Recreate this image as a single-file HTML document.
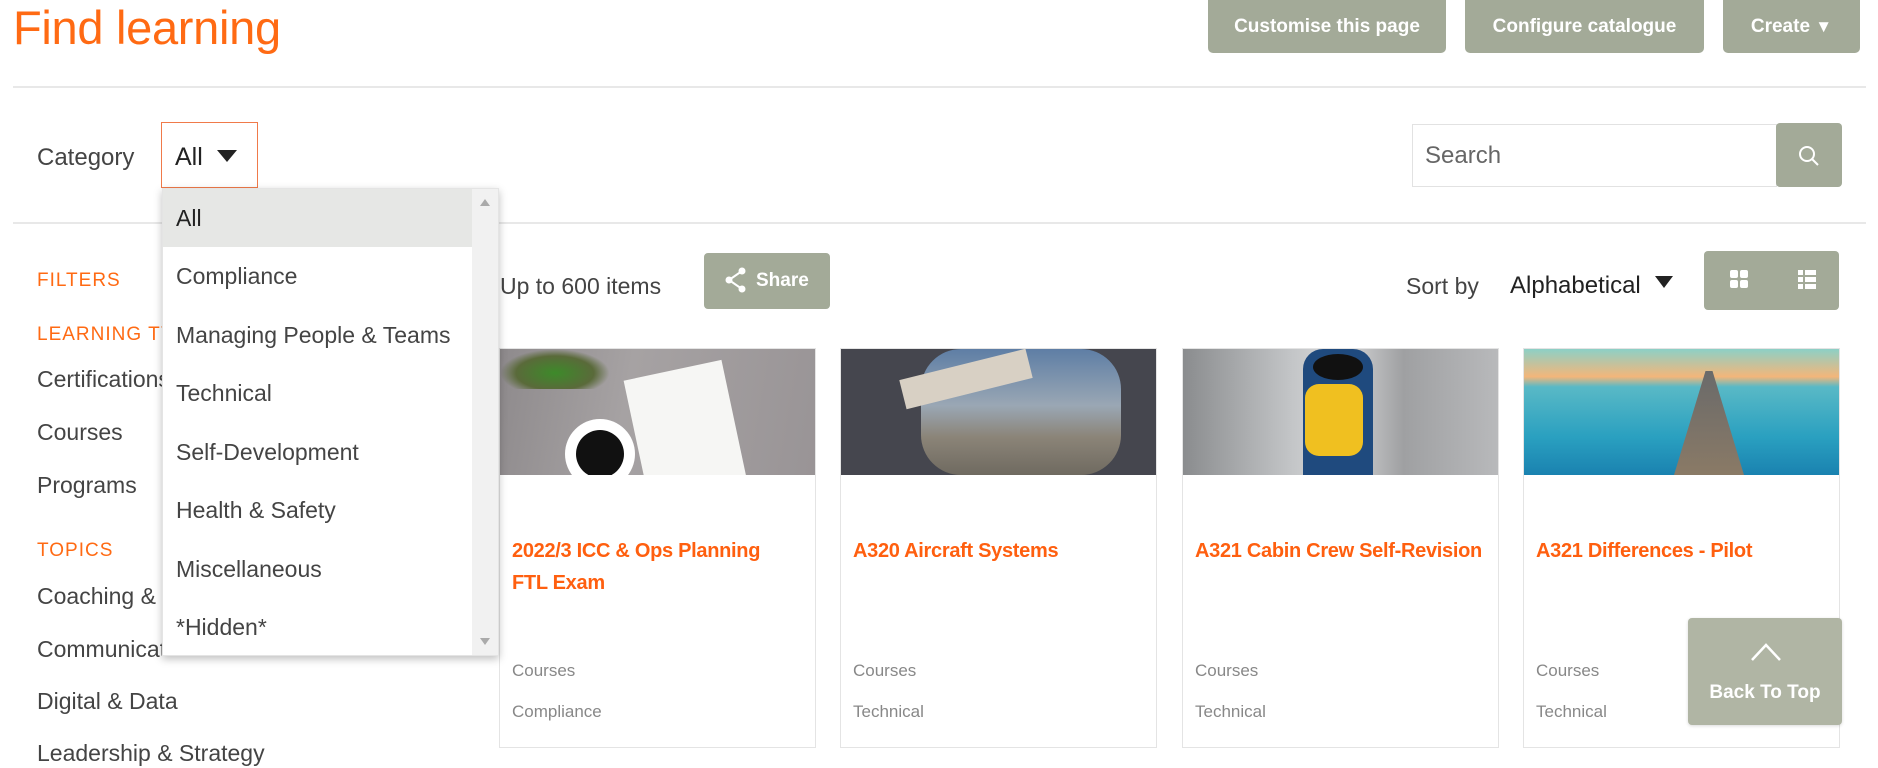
<!DOCTYPE html>
<html><head><meta charset="utf-8"><style>
*{box-sizing:border-box;margin:0;padding:0}
body{width:1878px;height:768px;overflow:hidden;background:#fff;font-family:"Liberation Sans",sans-serif;color:#333;position:relative}
.a{position:absolute}
h1{position:absolute;left:13px;top:0px;font-size:47px;font-weight:400;color:#ff6a13;letter-spacing:-0.3px}
.btn{position:absolute;top:0;height:53px;background:#a3aa98;color:#fff;font-weight:700;font-size:19px;border-radius:0 0 5px 5px;display:flex;align-items:center;justify-content:center}
.hr{position:absolute;left:13px;width:1853px;height:2px;background:#e8e8e8}
.lbl{font-size:24px;color:#444}
.dd{position:absolute;left:162px;top:188px;width:337px;height:468px;background:#fff;box-shadow:0 3px 8px rgba(0,0,0,.25);border:1px solid #e4e4e4}
.dd div.it{position:absolute;left:0;width:311px;height:58px;padding-left:13px;font-size:23px;color:#444;line-height:58px}
.sb{position:absolute;right:0;top:0;width:26px;height:100%;background:#f1f1f1}
.side{position:absolute;left:37px;font-size:23px;color:#444;white-space:nowrap}
.clip{width:125px;overflow:hidden}
.or{color:#ff6a13;font-size:19px;letter-spacing:1px}
.card{position:absolute;top:348px;width:317px;height:400px;border:1px solid #e4e4e4;background:#fff}
.img{position:absolute;left:0;top:0;width:315px;height:126px;overflow:hidden}
.ct{position:absolute;left:12px;top:186px;width:270px;color:#ff5f0f;font-size:20px;line-height:32px;font-weight:700;letter-spacing:-0.3px}
.m1,.m2{position:absolute;left:12px;color:#888;font-size:17px}
.m1{top:312px}.m2{top:353px}
</style></head><body>
<h1>Find learning</h1>
<div class="btn" style="left:1208px;width:238px">Customise this page</div>
<div class="btn" style="left:1465px;width:239px">Configure catalogue</div>
<div class="btn" style="left:1723px;width:137px">Create&nbsp;<span style="font-size:17px">▼</span></div>
<div class="hr" style="top:86px"></div>

<div class="a lbl" style="left:37px;top:144px">Category</div>
<div class="a" style="left:161px;top:122px;width:97px;height:66px;border:1px solid #f07a4a"></div>
<div class="a" style="left:175px;top:143px;font-size:25px;color:#222">All</div>
<div class="a" style="left:217px;top:150px;width:0;height:0;border-left:10px solid transparent;border-right:10px solid transparent;border-top:12px solid #222"></div>

<div class="a" style="left:1412px;top:124px;width:365px;height:63px;border:1px solid #e2e2e2"></div>
<div class="a" style="left:1425px;top:142px;font-size:24px;color:#666">Search</div>
<div class="a" style="left:1776px;top:123px;width:66px;height:64px;background:#a3aa98;border-radius:4px"></div>
<svg class="a" style="left:1796px;top:143px" width="26" height="26" viewBox="0 0 26 26"><circle cx="11" cy="11" r="7" fill="none" stroke="#fff" stroke-width="2"/><path d="M16 16 L22 22" stroke="#fff" stroke-width="2"/></svg>
<div class="hr" style="top:222px"></div>

<div class="side or" style="top:270px">FILTERS</div>
<div class="side or clip" style="top:324px">LEARNING TYPE</div>
<div class="side clip" style="top:366px">Certifications</div>
<div class="side" style="top:419px">Courses</div>
<div class="side" style="top:472px">Programs</div>
<div class="side or" style="top:540px">TOPICS</div>
<div class="side clip" style="top:583px">Coaching &amp; Mentoring</div>
<div class="side clip" style="top:636px">Communication</div>
<div class="side" style="top:688px">Digital &amp; Data</div>
<div class="side" style="top:740px">Leadership &amp; Strategy</div>

<div class="a lbl" style="left:500px;top:273px;font-size:23px">Up to 600 items</div>
<div class="a" style="left:704px;top:253px;width:126px;height:56px;background:#a3aa98;border-radius:4px;color:#fff;font-weight:700;font-size:19px;line-height:56px;padding-left:52px">Share</div>
<svg class="a" style="left:724px;top:267px" width="24" height="26" viewBox="0 0 24 26"><circle cx="18" cy="4" r="3.5" fill="#fff"/><circle cx="5" cy="13" r="3.5" fill="#fff"/><circle cx="18" cy="22" r="3.5" fill="#fff"/><path d="M18 4 L5 13 L18 22" stroke="#fff" stroke-width="2" fill="none"/></svg>

<div class="a lbl" style="left:1406px;top:273px;font-size:23px">Sort by</div>
<div class="a" style="left:1510px;top:272px;font-size:24px;color:#222">Alphabetical</div>
<div class="a" style="left:1655px;top:276px;width:0;height:0;border-left:9px solid transparent;border-right:9px solid transparent;border-top:12px solid #222"></div>
<div class="a" style="left:1704px;top:251px;width:135px;height:59px;background:#a3aa98;border-radius:4px"></div>
<svg class="a" style="left:1728px;top:268px" width="22" height="22" viewBox="0 0 22 22" fill="#fff"><rect x="2" y="2" width="8" height="8" rx="2"/><rect x="12" y="2" width="8" height="8" rx="2"/><rect x="2" y="12" width="8" height="8" rx="2"/><rect x="12" y="12" width="8" height="8" rx="2"/></svg>
<svg class="a" style="left:1796px;top:268px" width="22" height="22" viewBox="0 0 22 22" fill="#fff"><rect x="2" y="2" width="5" height="5"/><rect x="9" y="2" width="11" height="5"/><rect x="2" y="9" width="5" height="5"/><rect x="9" y="9" width="11" height="5"/><rect x="2" y="16" width="5" height="5"/><rect x="9" y="16" width="11" height="5"/></svg>

<div class="card" style="left:499px"><div class="img" style="background:linear-gradient(100deg,#8e8a8c,#a6a2a3 40%,#999496)">
<div class="a" style="left:0;top:0;width:110px;height:40px;background:radial-gradient(ellipse at 50% 60%,#3d8a2a,#5a6a3a 50%,transparent 70%)"></div>
<div class="a" style="left:135px;top:20px;width:100px;height:120px;background:#f6f6f4;transform:rotate(-12deg)"></div>
<div class="a" style="left:65px;top:70px;width:70px;height:70px;border-radius:50%;background:#fff"></div>
<div class="a" style="left:76px;top:81px;width:48px;height:48px;border-radius:50%;background:#111"></div></div>
<div class="ct">2022/3 ICC &amp; Ops Planning FTL Exam</div><div class="m1">Courses</div><div class="m2">Compliance</div></div>

<div class="card" style="left:840px"><div class="img" style="background:#45464e">
<div class="a" style="left:80px;top:0;width:200px;height:126px;border-radius:40px;background:linear-gradient(180deg,#5e7ea5,#9aa7b4 45%,#8b8478 70%,#6f6a60)"></div>
<div class="a" style="left:60px;top:15px;width:130px;height:30px;background:#d8d0c4;transform:rotate(-14deg)"></div></div>
<div class="ct">A320 Aircraft Systems</div><div class="m1">Courses</div><div class="m2">Technical</div></div>

<div class="card" style="left:1182px"><div class="img" style="background:linear-gradient(90deg,#8a8c8e,#c4c6c8 35%,#d8d9da 50%,#9fa0a2 70%,#b8b9bb)">
<div class="a" style="left:120px;top:0;width:70px;height:126px;background:#1f4a7e;border-radius:20px 20px 0 0"></div>
<div class="a" style="left:130px;top:5px;width:50px;height:26px;background:#111;border-radius:50%"></div>
<div class="a" style="left:122px;top:35px;width:58px;height:72px;background:#f0c020;border-radius:14px"></div></div>
<div class="ct" style="width:300px">A321 Cabin Crew Self-Revision</div><div class="m1">Courses</div><div class="m2">Technical</div></div>

<div class="card" style="left:1523px"><div class="img" style="background:linear-gradient(180deg,#8dd0c6 0%,#f3b67a 22%,#59b9c6 30%,#2aa0c0 70%,#1a82b0 100%)">
<div class="a" style="left:150px;top:22px;width:70px;height:104px;background:linear-gradient(180deg,#6a6a6a,#8a7a66);clip-path:polygon(45% 0,55% 0,100% 100%,0 100%)"></div></div>
<div class="ct">A321 Differences - Pilot</div><div class="m1">Courses</div><div class="m2">Technical</div></div>

<div class="a" style="left:1688px;top:618px;width:154px;height:107px;background:#b0b5a4;border-radius:4px;box-shadow:0 1px 3px rgba(0,0,0,.15)"></div>
<svg class="a" style="left:1749px;top:640px" width="34" height="24" viewBox="0 0 34 24"><path d="M3 20 L17 5 L31 20" stroke="#fff" stroke-width="2.5" fill="none"/></svg>
<div class="a" style="left:1688px;top:682px;width:154px;text-align:center;color:#fff;font-weight:700;font-size:19px">Back To Top</div>

<div class="dd">
<div class="it" style="top:0;background:#e6e7e5;color:#222">All</div>
<div class="it" style="top:58px">Compliance</div>
<div class="it" style="top:117px">Managing People &amp; Teams</div>
<div class="it" style="top:175px">Technical</div>
<div class="it" style="top:234px">Self-Development</div>
<div class="it" style="top:292px">Health &amp; Safety</div>
<div class="it" style="top:351px">Miscellaneous</div>
<div class="it" style="top:409px">*Hidden*</div>
<div class="sb"><div class="a" style="left:8px;top:10px;border-left:5px solid transparent;border-right:5px solid transparent;border-bottom:7px solid #aaa"></div><div class="a" style="left:8px;bottom:10px;border-left:5px solid transparent;border-right:5px solid transparent;border-top:7px solid #aaa"></div></div>
</div>
</body></html>
